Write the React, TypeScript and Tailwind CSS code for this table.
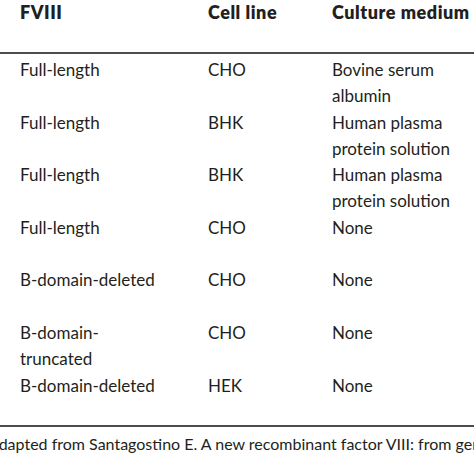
import React from "react";

type Row = {
  fviii: React.ReactNode;
  cell: string;
  medium: React.ReactNode;
};

const rows: Row[] = [
  { fviii: "Full-length", cell: "CHO", medium: <>Bovine serum<br />albumin</> },
  { fviii: "Full-length", cell: "BHK", medium: <>Human plasma<br />protein solution</> },
  { fviii: "Full-length", cell: "BHK", medium: <>Human plasma<br />protein solution</> },
  { fviii: "Full-length", cell: "CHO", medium: "None" },
  { fviii: "B-domain-deleted", cell: "CHO", medium: "None" },
  { fviii: <>B-domain-<br />truncated</>, cell: "CHO", medium: "None" },
  { fviii: "B-domain-deleted", cell: "HEK", medium: "None" },
];

export default function App() {
  return (
    <div
      className="w-[474px] h-[474px] overflow-hidden bg-white text-[#231f20]"
      style={{ fontFamily: "Lato, 'Open Sans', sans-serif" }}
    >
      <div className="w-[580px]">
        {/* header */}
        <div className="grid grid-cols-[188px_124px_1fr] pl-[20px] h-[52px] text-[18px] font-extrabold tracking-[0.03em] leading-[25px]">
          <div>FVIII</div>
          <div>Cell line</div>
          <div className="whitespace-nowrap">Culture medium</div>
        </div>
        <div className="h-[2px] bg-[#4d4d4d]" />

        {/* body */}
        <div className="pt-[3px]">
          {rows.map((r, i) => (
            <div
              key={i}
              className="grid grid-cols-[188px_124px_1fr] pl-[20px] h-[52.6px] text-[17px] leading-[26px]"
            >
              <div>{r.fviii}</div>
              <div>{r.cell}</div>
              <div className="whitespace-nowrap">{r.medium}</div>
            </div>
          ))}
        </div>
        <div className="h-[2px] bg-[#4d4d4d]" />

        {/* footnote */}
        <div className="-ml-[12px] pt-[5px] text-[16px] leading-[24px] whitespace-nowrap">
          Adapted from Santagostino E. A new recombinant factor VIII: from genetics to clinical use.
        </div>
      </div>
    </div>
  );
}
